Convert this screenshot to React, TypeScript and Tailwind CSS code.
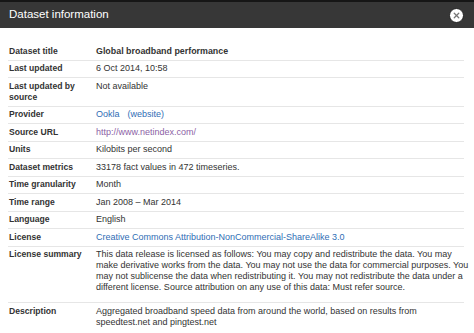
import { X } from 'lucide-react';

type Row = {
  label: string;
  value: React.ReactNode;
  bold?: boolean;
};

const summary = [
  'This data release is licensed as follows: You may copy and redistribute the data. You may',
  'make derivative works from the data. You may not use the data for commercial purposes. You',
  'may not sublicense the data when redistributing it. You may not redistribute the data under a',
  'different license. Source attribution on any use of this data: Must refer source.',
];

const rows: Row[] = [
  { label: 'Dataset title', value: 'Global broadband performance', bold: true },
  { label: 'Last updated', value: '6 Oct 2014, 10:58' },
  { label: 'Last updated by source', value: 'Not available' },
  {
    label: 'Provider',
    value: (
      <span className="flex gap-[8px] text-[#2f6db5]">
        <span>Ookla</span>
        <span>(website)</span>
      </span>
    ),
  },
  { label: 'Source URL', value: <span className="text-[#8c5fa6]">http://www.netindex.com/</span> },
  { label: 'Units', value: 'Kilobits per second' },
  { label: 'Dataset metrics', value: '33178 fact values in 472 timeseries.' },
  { label: 'Time granularity', value: 'Month' },
  { label: 'Time range', value: 'Jan 2008 – Mar 2014' },
  { label: 'Language', value: 'English' },
  {
    label: 'License',
    value: <span className="text-[#2f6db5]">Creative Commons Attribution-NonCommercial-ShareAlike 3.0</span>,
  },
  {
    label: 'License summary',
    value: (
      <div className="mb-[6px]">
        {summary.map((line) => (
          <div key={line} className="whitespace-nowrap">
            {line}
          </div>
        ))}
      </div>
    ),
  },
  {
    label: 'Description',
    value: (
      <div>
        <div className="whitespace-nowrap">
          Aggregated broadband speed data from around the world, based on results from
        </div>
        <div>speedtest.net and pingtest.net</div>
      </div>
    ),
  },
];

export default function App() {
  return (
    <div className="w-[474px] h-[333px] overflow-hidden bg-white font-['Liberation_Sans',Arial,sans-serif]">
      <div className="h-[2px] bg-[#161616]" />
      <div className="h-[26px] bg-[#373737] flex items-center justify-between pl-[9px] pr-[10px]">
        <span className="text-white text-[11.5px]">Dataset information</span>
        <span className="w-[15px] h-[15px] rounded-full bg-white border border-[#222] flex items-center justify-center">
          <X className="w-[9px] h-[9px] text-[#777]" strokeWidth={3.5} />
        </span>
      </div>
      <div className="pt-[15px] pl-[8px] pr-[10px]">
        <div className="flex flex-col leading-[11px] text-[#333]">
          {rows.map((r, i) => (
            <div
              key={r.label}
              className={`flex pt-[2.5px] pb-[3px] ${i > 0 ? 'border-t border-[#e6e6e6]' : ''}`}
            >
              <div className="w-[88px] shrink-0 pl-[1px] pr-[4px] font-bold text-[8.6px]">{r.label}</div>
              <div className={`flex-1 ${r.bold ? 'font-bold text-[8.9px]' : 'text-[9px]'}`}>{r.value}</div>
            </div>
          ))}
        </div>
      </div>
    </div>
  );
}
